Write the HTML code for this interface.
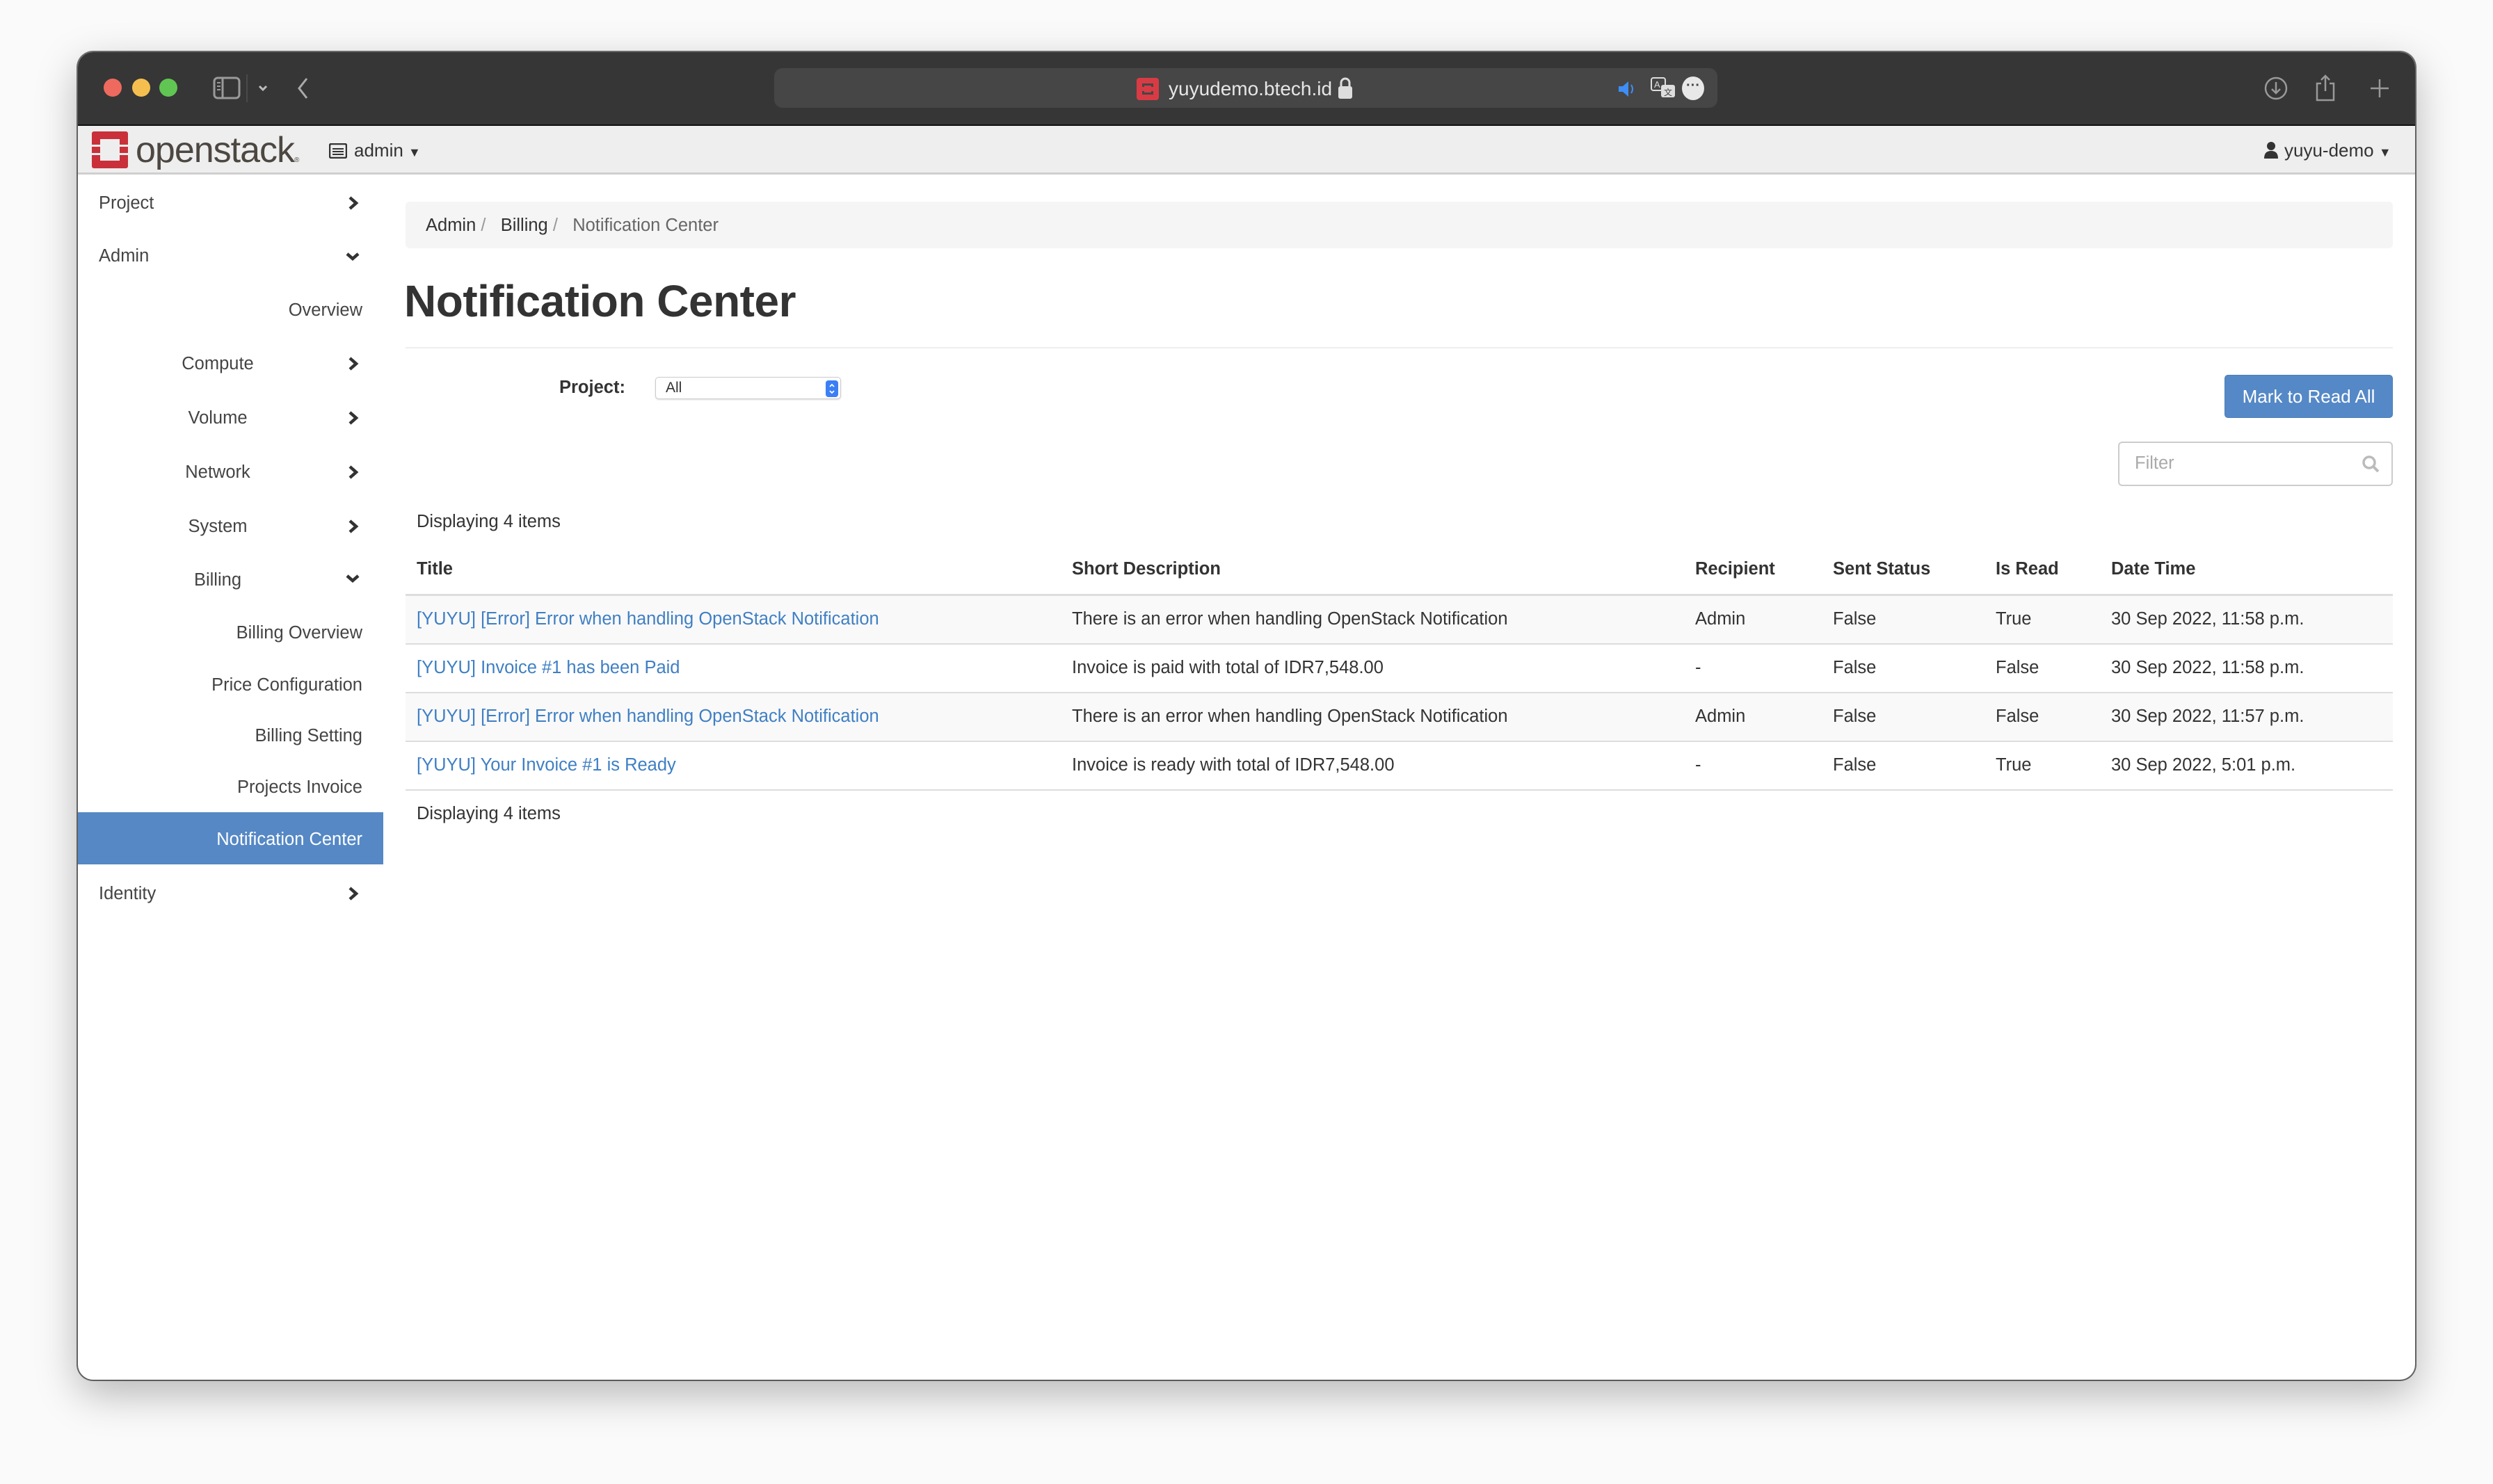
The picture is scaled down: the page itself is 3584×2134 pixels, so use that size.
<!DOCTYPE html>
<html><head><meta charset="utf-8"><style>
*{margin:0;padding:0;box-sizing:border-box}
body{width:3584px;height:2134px;background:#fafafa;position:relative;overflow:hidden;font-family:"Liberation Sans",Arial,sans-serif;color:#333}
.abs{position:absolute}
#win{position:absolute;left:112px;top:75px;width:3360px;height:1909px;border-radius:22px;background:#fff;overflow:hidden;box-shadow:0 20px 60px rgba(0,0,0,.28),0 0 0 2px rgba(0,0,0,.55)}
.t{position:absolute;white-space:nowrap;font-size:25.5px;line-height:30px}
.side{font-size:25.5px;color:#444}
a{color:#3f7fc4;text-decoration:none}
</style></head><body>
<div id="win">
  <div class="abs" style="left:0;top:0;width:3360px;height:106px;background:#363636;border-bottom:2px solid #111"></div>
  <div class="abs" style="left:37px;top:38px;width:26px;height:26px;border-radius:50%;background:#ee6a5e"></div>
  <div class="abs" style="left:78px;top:38px;width:26px;height:26px;border-radius:50%;background:#f5bf4f"></div>
  <div class="abs" style="left:117px;top:38px;width:26px;height:26px;border-radius:50%;background:#61c554"></div>
  <svg class="abs" style="left:190px;top:30px" width="160" height="45" viewBox="0 0 160 45">
    <rect x="6" y="7" width="36" height="29" rx="5" fill="none" stroke="#9a9a9a" stroke-width="3"/>
    <line x1="18" y1="7" x2="18" y2="36" stroke="#9a9a9a" stroke-width="3"/>
    <line x1="10" y1="14" x2="15" y2="14" stroke="#9a9a9a" stroke-width="2"/>
    <line x1="10" y1="19" x2="15" y2="19" stroke="#9a9a9a" stroke-width="2"/>
    <line x1="10" y1="24" x2="15" y2="24" stroke="#9a9a9a" stroke-width="2"/>
    <line x1="53" y1="2" x2="53" y2="42" stroke="#4a4a4a" stroke-width="2"/>
    <polyline points="71,19 76,24 81,19" fill="none" stroke="#bbb" stroke-width="3"/>
    <polyline points="139,8 128,22 139,36" fill="none" stroke="#aaa" stroke-width="3"/>
  </svg>
  <div class="abs" style="left:1001px;top:23px;width:1356px;height:57px;border-radius:12px;background:#464646"></div>
  <svg class="abs" style="left:1522px;top:37px" width="32" height="32" viewBox="0 0 32 32"><rect width="32" height="32" rx="4" fill="#d93b45"/><path d="M8 8h16v5h-3v-2h-10v10h10v-2h3v5h-16z" fill="#464646"/><rect x="6" y="13" width="20" height="6" fill="#d93b45"/></svg>
  <div class="t" style="left:1568px;top:38px;font-size:28px;color:#e6e6e6">yuyudemo.btech.id</div>
  <svg class="abs" style="left:1810px;top:35px" width="24" height="34" viewBox="0 0 24 34"><path d="M6 14V9a6 6 0 0 1 12 0v5" fill="none" stroke="#ddd" stroke-width="3"/><rect x="2" y="14" width="20" height="18" rx="3" fill="#ddd"/></svg>
  <svg class="abs" style="left:2212px;top:38px" width="30" height="30" viewBox="0 0 30 30"><path d="M3 11h6l8-7v22l-8-7H3z" fill="#3d8ef5"/><path d="M21 9q4 6 0 12" fill="none" stroke="#3d8ef5" stroke-width="2"/></svg>
  <svg class="abs" style="left:2260px;top:35px" width="40" height="36" viewBox="0 0 40 36"><rect x="2" y="2" width="20" height="18" rx="3" fill="none" stroke="#ddd" stroke-width="2"/><text x="6" y="16" font-size="13" fill="#ddd" font-family="Liberation Sans">A</text><rect x="16" y="12" width="20" height="18" rx="3" fill="#ddd"/><text x="20" y="27" font-size="12" fill="#444" font-family="Liberation Sans">文</text></svg>
  <div class="abs" style="left:2306px;top:35px;width:32px;height:34px;border-radius:50%;background:#e8e8e8;color:#444;font-size:20px;line-height:26px;text-align:center;font-weight:bold">···</div>
  <svg class="abs" style="left:3140px;top:30px" width="200" height="45" viewBox="0 0 200 45">
    <circle cx="20" cy="22" r="15" fill="none" stroke="#999" stroke-width="2.5"/><path d="M20 13v16M14 23l6 6 6-6" fill="none" stroke="#999" stroke-width="2.5"/>
    <path d="M85 15h-6v24h24V15h-6M91 4v22M85 10l6-6 6 6" fill="none" stroke="#999" stroke-width="2.5"/>
    <path d="M156 22h26M169 9v26" stroke="#999" stroke-width="2.5"/>
  </svg>
  <div class="abs" style="left:0;top:106px;width:3360px;height:70px;background:#eee;border-bottom:3px solid #cfcfcf"></div>
  <svg class="abs" style="left:20px;top:114px" width="52" height="53" viewBox="0 0 52 53"><rect width="52" height="53" rx="3" fill="#c9303a"/><rect x="12" y="11" width="28" height="31" fill="#eee"/><rect x="0" y="19" width="52" height="3" fill="#eee"/><rect x="0" y="31" width="52" height="3" fill="#eee"/></svg>
  <div class="t" style="left:83px;top:111px;font-size:52px;line-height:60px;color:#4d4742;letter-spacing:-1px">openstack<span style="font-size:10px">®</span></div>
  <svg class="abs" style="left:361px;top:131px" width="26" height="22" viewBox="0 0 26 22"><rect x="1" y="1" width="24" height="20" rx="2" fill="none" stroke="#333" stroke-width="2.5"/><path d="M5 8h16M5 12h16M5 16h16" stroke="#333" stroke-width="2"/></svg>
  <div class="t" style="left:397px;top:126px;font-size:26px;color:#333">admin <span style="font-size:18px">▼</span></div>
  <svg class="abs" style="left:3142px;top:128px" width="22" height="26" viewBox="0 0 22 26"><circle cx="11" cy="7" r="6" fill="#333"/><path d="M1 25q0-11 10-11t10 11z" fill="#333"/></svg>
  <div class="t" style="left:3172px;top:126px;font-size:26px;color:#333">yuyu-demo <span style="font-size:18px">▼</span></div>

  <div class="abs" style="left:0;top:1093px;width:439px;height:75px;background:#5588c5"></div>
  <div class="side">
    <div class="t" style="left:30px;top:202px">Project</div>
    <div class="t" style="left:30px;top:278px">Admin</div>
    <div class="t" style="right:2951px;top:356px">Overview</div>
    <div class="t" style="left:90px;width:222px;text-align:center;top:433px">Compute</div>
    <div class="t" style="left:90px;width:222px;text-align:center;top:511px">Volume</div>
    <div class="t" style="left:90px;width:222px;text-align:center;top:589px">Network</div>
    <div class="t" style="left:90px;width:222px;text-align:center;top:667px">System</div>
    <div class="t" style="left:90px;width:222px;text-align:center;top:744px">Billing</div>
    <div class="t" style="right:2951px;top:820px">Billing Overview</div>
    <div class="t" style="right:2951px;top:895px">Price Configuration</div>
    <div class="t" style="right:2951px;top:968px">Billing Setting</div>
    <div class="t" style="right:2951px;top:1042px">Projects Invoice</div>
    <div class="t" style="right:2951px;top:1117px;color:#fff">Notification Center</div>
    <div class="t" style="left:30px;top:1195px">Identity</div>
  </div>
  <svg class="abs" style="left:376px;top:190px" width="40" height="1120" viewBox="0 0 40 1120">
    <g fill="none" stroke="#333" stroke-width="4.5">
      <polyline points="15,19 24,27 15,35"/>
      <polyline points="11,100 19,107 27,100"/>
      <polyline points="15,250 24,258 15,266"/>
      <polyline points="15,328 24,336 15,344"/>
      <polyline points="15,406 24,414 15,422"/>
      <polyline points="15,484 24,492 15,500"/>
      <polyline points="11,563 19,570 27,563"/>
      <polyline points="15,1012 24,1020 15,1028"/>
    </g>
  </svg>

  <div class="abs" style="left:471px;top:215px;width:2857px;height:67px;background:#f5f5f5;border-radius:6px"></div>
  <div class="t" style="left:500px;top:234px;color:#333">Admin<span style="color:#999">&nbsp;/&nbsp;&nbsp;</span> Billing<span style="color:#999">&nbsp;/&nbsp;&nbsp;</span> <span style="color:#666">Notification Center</span></div>
  <div class="t" style="left:469px;top:318px;font-size:64px;line-height:80px;color:#333;font-weight:bold;letter-spacing:-0.5px">Notification Center</div>
  <div class="abs" style="left:471px;top:424px;width:2857px;height:2px;background:#eee"></div>
  <div class="t" style="left:692px;top:467px;font-weight:bold">Project:</div>
  <div class="abs" style="left:830px;top:467px;width:267px;height:32px;border:1px solid #ccc;border-radius:5px;box-shadow:0 1px 2px rgba(0,0,0,.15);background:#fff"></div>
  <div class="t" style="left:845px;top:468px;font-size:21px">All</div>
  <svg class="abs" style="left:1075px;top:472px" width="18" height="24" viewBox="0 0 18 24"><rect width="18" height="24" rx="4" fill="#3b7ff5"/><path d="M6 9l3-3 3 3M6 15l3 3 3-3" fill="none" stroke="#fff" stroke-width="1.8"/></svg>
  <div class="abs" style="left:3086px;top:464px;width:242px;height:62px;background:#5588c6;border-radius:5px;border:1px solid #4a7cb8"></div>
  <div class="t" style="left:3086px;top:480px;width:242px;text-align:center;color:#fff;font-size:26px">Mark to Read All</div>
  <div class="abs" style="left:2933px;top:560px;width:395px;height:64px;border:2px solid #ccc;border-radius:6px"></div>
  <div class="t" style="left:2957px;top:576px;color:#aaa">Filter</div>
  <svg class="abs" style="left:3282px;top:578px" width="28" height="28" viewBox="0 0 28 28"><circle cx="12" cy="12" r="8" fill="none" stroke="#bbb" stroke-width="3.5"/><path d="M18 18l7 7" stroke="#bbb" stroke-width="4"/></svg>

  <div class="t" style="left:487px;top:660px">Displaying 4 items</div>
  <div class="abs" style="left:471px;top:779px;width:2857px;height:3px;background:#ddd"></div>
  <div class="t" style="left:487px;top:728px;font-weight:bold">Title</div>
  <div class="t" style="left:1429px;top:728px;font-weight:bold">Short Description</div>
  <div class="t" style="left:2325px;top:728px;font-weight:bold">Recipient</div>
  <div class="t" style="left:2523px;top:728px;font-weight:bold">Sent Status</div>
  <div class="t" style="left:2757px;top:728px;font-weight:bold">Is Read</div>
  <div class="t" style="left:2923px;top:728px;font-weight:bold">Date Time</div>

  <div class="abs" style="left:471px;top:782px;width:2857px;height:68px;background:#f9f9f9"></div>
  <div class="abs" style="left:471px;top:850px;width:2857px;height:2px;background:#ddd"></div>
  <div class="abs" style="left:471px;top:920px;width:2857px;height:2px;background:#ddd"></div>
  <div class="abs" style="left:471px;top:922px;width:2857px;height:68px;background:#f9f9f9"></div>
  <div class="abs" style="left:471px;top:990px;width:2857px;height:2px;background:#ddd"></div>
  <div class="abs" style="left:471px;top:1060px;width:2857px;height:2px;background:#ddd"></div>

  <div class="t" style="left:487px;top:800px"><a>[YUYU] [Error] Error when handling OpenStack Notification</a></div>
  <div class="t" style="left:1429px;top:800px">There is an error when handling OpenStack Notification</div>
  <div class="t" style="left:2325px;top:800px">Admin</div>
  <div class="t" style="left:2523px;top:800px">False</div>
  <div class="t" style="left:2757px;top:800px">True</div>
  <div class="t" style="left:2923px;top:800px">30 Sep 2022, 11:58 p.m.</div>

  <div class="t" style="left:487px;top:870px"><a>[YUYU] Invoice #1 has been Paid</a></div>
  <div class="t" style="left:1429px;top:870px">Invoice is paid with total of IDR7,548.00</div>
  <div class="t" style="left:2325px;top:870px">-</div>
  <div class="t" style="left:2523px;top:870px">False</div>
  <div class="t" style="left:2757px;top:870px">False</div>
  <div class="t" style="left:2923px;top:870px">30 Sep 2022, 11:58 p.m.</div>

  <div class="t" style="left:487px;top:940px"><a>[YUYU] [Error] Error when handling OpenStack Notification</a></div>
  <div class="t" style="left:1429px;top:940px">There is an error when handling OpenStack Notification</div>
  <div class="t" style="left:2325px;top:940px">Admin</div>
  <div class="t" style="left:2523px;top:940px">False</div>
  <div class="t" style="left:2757px;top:940px">False</div>
  <div class="t" style="left:2923px;top:940px">30 Sep 2022, 11:57 p.m.</div>

  <div class="t" style="left:487px;top:1010px"><a>[YUYU] Your Invoice #1 is Ready</a></div>
  <div class="t" style="left:1429px;top:1010px">Invoice is ready with total of IDR7,548.00</div>
  <div class="t" style="left:2325px;top:1010px">-</div>
  <div class="t" style="left:2523px;top:1010px">False</div>
  <div class="t" style="left:2757px;top:1010px">True</div>
  <div class="t" style="left:2923px;top:1010px">30 Sep 2022, 5:01 p.m.</div>

  <div class="t" style="left:487px;top:1080px">Displaying 4 items</div>
</div>
</body></html>
